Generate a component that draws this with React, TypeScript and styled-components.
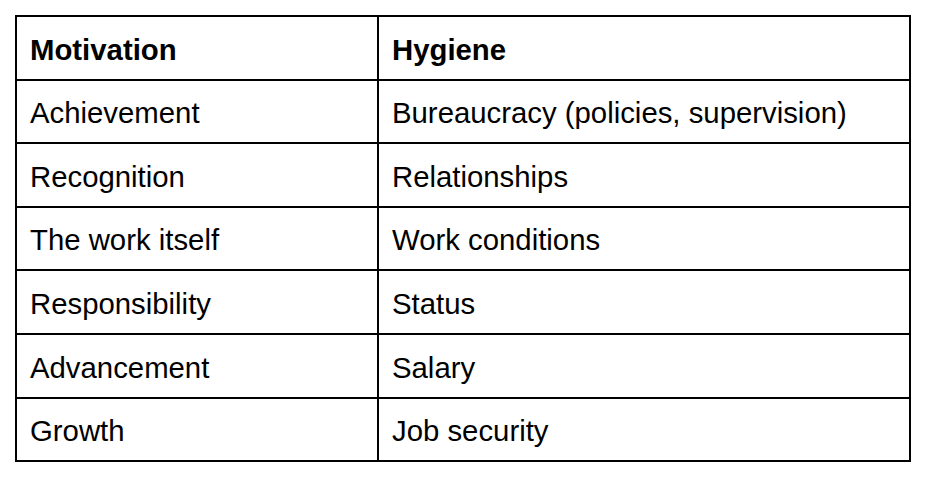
import React from "react";
import styled, { createGlobalStyle } from "styled-components";

const Global = createGlobalStyle`
  html, body { margin: 0; padding: 0; background: #ffffff; }
  body { font-family: "Liberation Sans", Arial, sans-serif; color: #000; }
`;

const Page = styled.div`
  padding: 15px 0 0 15px;
`;

const Table = styled.table`
  border-collapse: collapse;
  width: 894px;
  table-layout: fixed;
`;

const Col = styled.col<{ $w: number }>`
  width: ${(p) => p.$w}px;
`;

const Row = styled.tr`
  height: 63.6px;
`;

const Cell = styled.td<{ $head?: boolean }>`
  border: 2px solid #000;
  padding: 3px 0 0 13px;
  font-size: 29.33px;
  line-height: 1;
  font-weight: ${(p) => (p.$head ? 700 : 400)};
  vertical-align: middle;
  white-space: nowrap;
`;

const rows: [string, string][] = [
  ["Achievement", "Bureaucracy (policies, supervision)"],
  ["Recognition", "Relationships"],
  ["The work itself", "Work conditions"],
  ["Responsibility", "Status"],
  ["Advancement", "Salary"],
  ["Growth", "Job security"],
];

export default function App() {
  return (
    <>
      <Global />
      <Page>
        <Table>
          <colgroup>
            <Col $w={362} />
            <Col $w={532} />
          </colgroup>
          <tbody>
            <Row>
              <Cell $head>Motivation</Cell>
              <Cell $head>Hygiene</Cell>
            </Row>
            {rows.map(([a, b]) => (
              <Row key={a}>
                <Cell>{a}</Cell>
                <Cell>{b}</Cell>
              </Row>
            ))}
          </tbody>
        </Table>
      </Page>
    </>
  );
}
